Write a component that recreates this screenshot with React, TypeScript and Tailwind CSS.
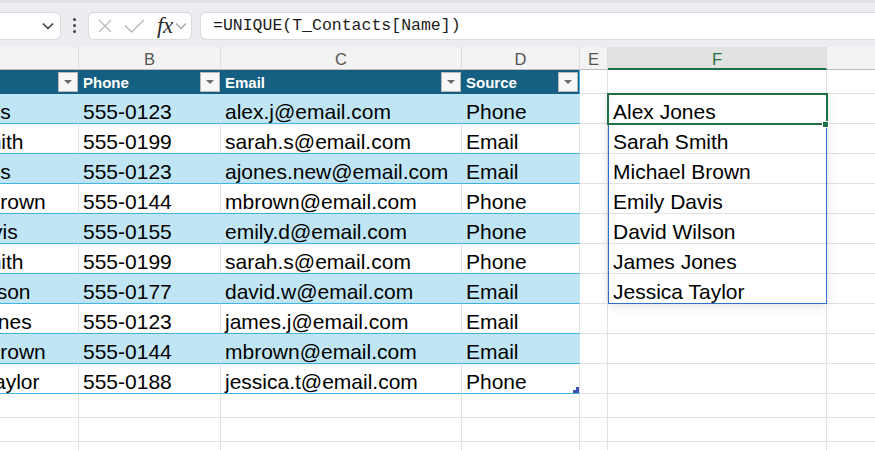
import React from 'react';

const contacts: [string, string, string, string][] = [
  ['Alex Jones', '555-0123', 'alex.j@email.com', 'Phone'],
  ['Sarah Smith', '555-0199', 'sarah.s@email.com', 'Email'],
  ['Alex Jones', '555-0123', 'ajones.new@email.com', 'Email'],
  ['Michael Brown', '555-0144', 'mbrown@email.com', 'Phone'],
  ['Emily Davis', '555-0155', 'emily.d@email.com', 'Phone'],
  ['Sarah Smith', '555-0199', 'sarah.s@email.com', 'Phone'],
  ['David Wilson', '555-0177', 'david.w@email.com', 'Email'],
  ['James Jones', '555-0123', 'james.j@email.com', 'Email'],
  ['Michael Brown', '555-0144', 'mbrown@email.com', 'Email'],
  ['Jessica Taylor', '555-0188', 'jessica.t@email.com', 'Phone'],
];

const unique = ['Alex Jones', 'Sarah Smith', 'Michael Brown', 'Emily Davis', 'David Wilson', 'James Jones', 'Jessica Taylor'];

const W = ['w-[175px]', 'w-[142px]', 'w-[241px]', 'w-[118px]', 'w-[28px]', 'w-[219px]', 'w-[160px]'];
const grid = 'border-r border-b border-[#e1e1e1]';

const FilterButton: React.FC = () => (
  <div className="w-[20px] h-[20px] mr-[1px] shrink-0 bg-[#f7f7f7] border border-[#b8b8b8] flex items-center justify-center">
    <svg width="8" height="4" viewBox="0 0 8 4"><polygon points="0,0 8,0 4,4" fill="#6b6b6b" /></svg>
  </div>
);

const TopBar: React.FC = () => (
  <div className="h-[47px] bg-[#ececf1] border-t-[3px] border-[#e2e2e8] flex items-center gap-[8px] pt-[1px]">
    <div className="w-[61px] h-[28px] bg-white border border-[#d9d9de] rounded-r-md border-l-0 flex items-center justify-end pr-[6px]">
      <svg width="12" height="8" viewBox="0 0 12 8"><polyline points="1,1.5 6,6.5 11,1.5" fill="none" stroke="#333" strokeWidth="1.4" /></svg>
    </div>
    <div className="flex flex-col gap-[3px] px-[4px]">
      <span className="w-[3px] h-[3px] bg-[#444] rounded-full" />
      <span className="w-[3px] h-[3px] bg-[#444] rounded-full" />
      <span className="w-[3px] h-[3px] bg-[#444] rounded-full" />
    </div>
    <div className="w-[104px] h-[28px] bg-white border border-[#d9d9de] rounded-md flex items-center pl-[8px] gap-[11px]">
      <svg width="16" height="16" viewBox="0 0 16 16"><path d="M2 2 L14 14 M14 2 L2 14" stroke="#b9b9b9" strokeWidth="1.3" /></svg>
      <svg width="21" height="16" viewBox="0 0 21 16"><polyline points="1,7.5 7.5,14 20,2" fill="none" stroke="#b9b9b9" strokeWidth="1.3" /></svg>
      <div className="flex items-center gap-[2px] ml-[1px]">
        <span className="font-['Liberation_Serif',serif] italic text-[23px] leading-none text-[#2b2b2b] tracking-[-0.5px]">fx</span>
        <svg width="12" height="8" viewBox="0 0 12 8"><polyline points="1,1.5 6,6.5 11,1.5" fill="none" stroke="#9a9a9a" strokeWidth="1.1" /></svg>
      </div>
    </div>
    <div className="flex-1 h-[28px] bg-white border border-[#d9d9de] border-r-0 rounded-l-md flex items-center pl-[12px]">
      <span className="font-['Liberation_Mono',monospace] text-[16.5px] text-[#1b1b1b] pt-[2px]">=UNIQUE(T_Contacts[Name])</span>
    </div>
  </div>
);

const App: React.FC = () => {
  const letters = ['A', 'B', 'C', 'D', 'E', 'F', 'G'];
  return (
    <div className="w-[875px] h-[450px] overflow-hidden bg-white font-['Liberation_Sans',Arial,sans-serif]">
      <TopBar />
      <div className="relative">
        <div className="ml-[-96px] w-max">
          {/* column letters */}
          <div className="flex h-[23px] bg-[#f3f3f3]">
            {letters.map((l, i) => (
              <div
                key={l}
                className={`${W[i]} shrink-0 flex items-center justify-center pt-[3px] text-[16.5px] border-r border-[#dcdcdc] ${
                  i === 5 ? 'bg-[#e1e1e1] text-[#1e7145] border-b-2 border-b-[#1e7145]' : 'text-[#555] border-b border-b-[#bdbdbd]'
                }`}
              >
                {l}
              </div>
            ))}
          </div>

          {/* table header row */}
          <div className="flex h-[24px]">
            {['Name', 'Phone', 'Email', 'Source'].map((h, i) => (
              <div key={h} className={`${W[i]} shrink-0 bg-[#156082] flex items-center justify-between pl-[4px] text-white font-bold text-[15px] ${i === 3 ? 'border-r border-[#44b3e1]' : ''}`}>
                <span className="pt-[3px]">{h}</span>
                <FilterButton />
              </div>
            ))}
            <div className={`${W[4]} shrink-0 ${grid}`} />
            <div className={`${W[5]} shrink-0 ${grid}`} />
            <div className={`${W[6]} shrink-0 ${grid}`} />
          </div>

          {/* data rows */}
          {contacts.map((row, r) => {
            const banded = r % 2 === 0;
            return (
              <div key={r} className="flex h-[30px] text-[21px] text-black">
                {row.map((v, i) => (
                  <div
                    key={i}
                    className={`${W[i]} shrink-0 flex items-center pt-[6px] pl-[4px] whitespace-nowrap overflow-hidden border-b border-b-[#44b3e1] border-r ${
                      banded ? 'bg-[#c0e6f5] border-r-[#c0e6f5]' : 'bg-white border-r-[#e1e1e1]'
                    } ${i === 3 ? 'border-r-[#44b3e1] relative' : ''}`}
                  >
                    {v}
                    {i === 3 && r === contacts.length - 1 && (
                      <svg className="absolute right-[0px] bottom-[0px]" width="6" height="6" viewBox="0 0 6 6">
                        <polygon points="6,0 6,6 0,6 0,3 3,3 3,0" fill="#3f51b5" />
                      </svg>
                    )}
                  </div>
                ))}
                <div className={`${W[4]} shrink-0 ${grid}`} />
                <div className={`${W[5]} shrink-0 ${grid} flex items-center pt-[6px] pl-[5px]`}>{unique[r] ?? ''}</div>
                <div className={`${W[6]} shrink-0 ${grid}`} />
              </div>
            );
          })}

          {/* empty rows */}
          {[0, 1, 2].map((r) => (
            <div key={r} className="flex h-[24px]">
              {W.map((w, i) => (
                <div key={i} className={`${w} shrink-0 ${grid}`} />
              ))}
            </div>
          ))}
        </div>

        {/* spill range outline */}
        <div className="absolute left-[608px] top-[47px] w-[219px] h-[210px] border border-[#2f6fd0] shadow-[0_2px_10px_rgba(0,0,0,0.12)] pointer-events-none" />
        {/* active cell */}
        <div className="absolute left-[607px] top-[46px] w-[221px] h-[32px] border-2 border-[#1e7145] pointer-events-none" />
        <div className="absolute left-[822px] top-[74px] w-[7px] h-[7px] bg-[#1e7145] border border-white pointer-events-none" />
      </div>
    </div>
  );
};

export default App;
